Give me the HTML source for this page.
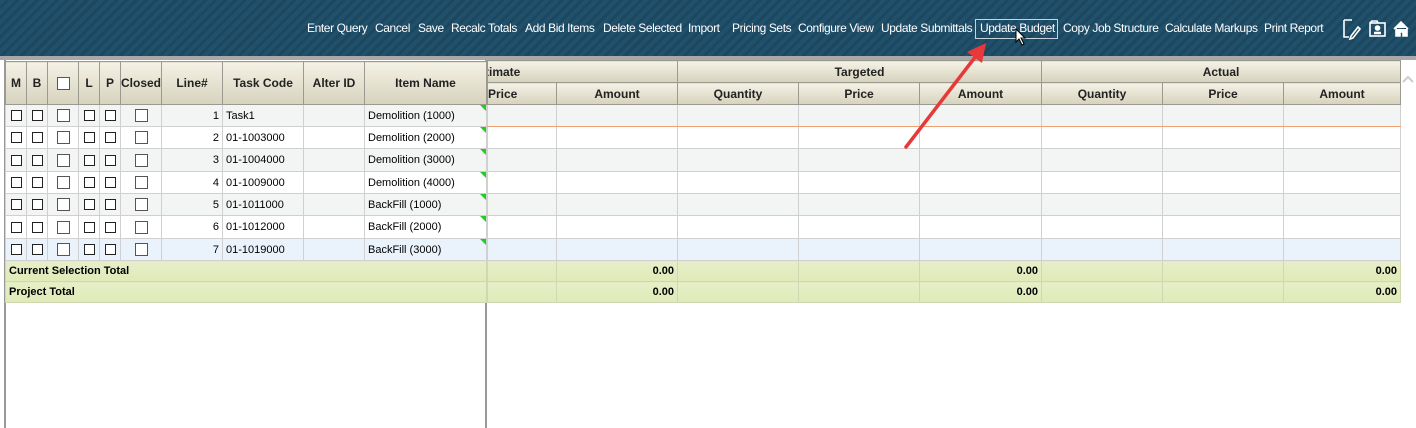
<!DOCTYPE html><html><head><style>
*{margin:0;padding:0;box-sizing:border-box}
body{width:1416px;height:428px;overflow:hidden;background:#fff;font-family:"Liberation Sans",Arial,sans-serif;position:relative}
#top{position:absolute;left:0;top:0;width:1416px;height:56px;background:repeating-linear-gradient(135deg,#21506b 0 4px,#1c4760 4px 7px)}
#top span{position:absolute;top:21px;color:#fff;font-size:12px;letter-spacing:-0.4px;white-space:nowrap}
#sep{position:absolute;left:0;top:56px;width:1416px;height:4px;background:#a8a8a8}
table{border-collapse:collapse;table-layout:fixed;position:absolute;font-size:11px}
td,th{border:1px solid #d0d0d0;overflow:hidden;white-space:nowrap;height:22px;padding:0 3px}
th{background:linear-gradient(#f4f2e6,#d6d2bd);border-color:#9a9a90;font-size:12px;color:#222;height:22px}
.cb{display:inline-block;width:11px;height:11px;border:1px solid #222;background:#fff;vertical-align:middle}
.cbw{width:13px;height:13px;border-color:#555}
tr.a td{background:#f3f5f4}
tr.w td{background:#fff}
tr.s td{background:#eaf3fc}
tr.h td{height:23px}
tr.t td{background:linear-gradient(#e6efc8,#dfeab8);font-weight:bold;height:21px;border-color:#cfd8b0}
.r{text-align:right}
.c{text-align:center}
.tri{position:relative}
.tri:after{content:"";position:absolute;right:0;top:0;border-top:6px solid #2c2;border-left:6px solid transparent}
</style></head><body>
<div id="top">
<span style="left:307px">Enter Query</span><span style="left:375px">Cancel</span><span style="left:418px">Save</span><span style="left:451px">Recalc Totals</span><span style="left:525px">Add Bid Items</span><span style="left:603px">Delete Selected</span><span style="left:688px">Import</span><span style="left:732px">Pricing Sets</span><span style="left:798px">Configure View</span><span style="left:881px">Update Submittals</span>
<div style="position:absolute;left:975px;top:19px;width:83px;height:20px;border:1px solid #c8d4dc"></div>
<span style="left:980px">Update Budget</span><span style="left:1063px">Copy Job Structure</span><span style="left:1165px">Calculate Markups</span><span style="left:1264px">Print Report</span>
<svg style="position:absolute;left:1340px;top:18px" width="76" height="22" viewBox="0 0 76 22" fill="none" stroke="#fff" stroke-width="1.6">
<path d="M4 2h8M4 2v17h5M11 18l7-9 2 2-7 9-3 1z"/>
<rect x="30" y="5" width="15" height="13"/><path d="M30 5l2-2h5l1 2" /><circle cx="37.5" cy="10" r="2" fill="#fff"/><path d="M34 15h7" stroke-width="2.5"/>
<path d="M54 11l7-7 7 7M56 10v8h4v-4h3v4h4v-8" fill="#fff"/></svg>
<svg style="position:absolute;left:1015px;top:28px" width="14" height="18" viewBox="0 0 14 18"><path d="M1 1v13l3-3 3 6 2-1-3-6h4z" fill="#fff" stroke="#000" stroke-width="1"/></svg>
</div>
<div id="sep"></div>
<div style="position:absolute;left:4px;top:60px;width:2px;height:368px;background:#999"></div>
<div style="position:absolute;left:485px;top:60px;width:2px;height:368px;background:#999"></div>
<table style="left:5px;top:61px;width:481px">
<colgroup><col style="width:21px"><col style="width:21px"><col style="width:31px"><col style="width:21px"><col style="width:21px"><col style="width:41px"><col style="width:61px"><col style="width:81px"><col style="width:61px"><col style="width:122px"></colgroup>
<tr><th style="height:43px;padding:0">M</th><th style="padding:0">B</th><th style="padding:0"><span class="cb cbw"></span></th><th style="padding:0">L</th><th style="padding:0">P</th><th style="padding:0">Closed</th><th>Line#</th><th>Task Code</th><th>Alter ID</th><th>Item Name</th></tr>
<tr class="a"><td class="c" style="padding:0"><span class="cb"></span></td><td class="c" style="padding:0"><span class="cb"></span></td><td class="c"><span class="cb cbw"></span></td><td class="c" style="padding:0"><span class="cb"></span></td><td class="c" style="padding:0"><span class="cb"></span></td><td class="c"><span class="cb cbw"></span></td><td class="r">1</td><td>Task1</td><td></td><td class="tri">Demolition (1000)</td></tr>
<tr class="w"><td class="c" style="padding:0"><span class="cb"></span></td><td class="c" style="padding:0"><span class="cb"></span></td><td class="c"><span class="cb cbw"></span></td><td class="c" style="padding:0"><span class="cb"></span></td><td class="c" style="padding:0"><span class="cb"></span></td><td class="c"><span class="cb cbw"></span></td><td class="r">2</td><td>01-1003000</td><td></td><td class="tri">Demolition (2000)</td></tr>
<tr class="a h"><td class="c" style="padding:0"><span class="cb"></span></td><td class="c" style="padding:0"><span class="cb"></span></td><td class="c"><span class="cb cbw"></span></td><td class="c" style="padding:0"><span class="cb"></span></td><td class="c" style="padding:0"><span class="cb"></span></td><td class="c"><span class="cb cbw"></span></td><td class="r">3</td><td>01-1004000</td><td></td><td class="tri">Demolition (3000)</td></tr>
<tr class="w"><td class="c" style="padding:0"><span class="cb"></span></td><td class="c" style="padding:0"><span class="cb"></span></td><td class="c"><span class="cb cbw"></span></td><td class="c" style="padding:0"><span class="cb"></span></td><td class="c" style="padding:0"><span class="cb"></span></td><td class="c"><span class="cb cbw"></span></td><td class="r">4</td><td>01-1009000</td><td></td><td class="tri">Demolition (4000)</td></tr>
<tr class="a"><td class="c" style="padding:0"><span class="cb"></span></td><td class="c" style="padding:0"><span class="cb"></span></td><td class="c"><span class="cb cbw"></span></td><td class="c" style="padding:0"><span class="cb"></span></td><td class="c" style="padding:0"><span class="cb"></span></td><td class="c"><span class="cb cbw"></span></td><td class="r">5</td><td>01-1011000</td><td></td><td class="tri">BackFill (1000)</td></tr>
<tr class="w h"><td class="c" style="padding:0"><span class="cb"></span></td><td class="c" style="padding:0"><span class="cb"></span></td><td class="c"><span class="cb cbw"></span></td><td class="c" style="padding:0"><span class="cb"></span></td><td class="c" style="padding:0"><span class="cb"></span></td><td class="c"><span class="cb cbw"></span></td><td class="r">6</td><td>01-1012000</td><td></td><td class="tri">BackFill (2000)</td></tr>
<tr class="s"><td class="c" style="padding:0"><span class="cb"></span></td><td class="c" style="padding:0"><span class="cb"></span></td><td class="c"><span class="cb cbw"></span></td><td class="c" style="padding:0"><span class="cb"></span></td><td class="c" style="padding:0"><span class="cb"></span></td><td class="c"><span class="cb cbw"></span></td><td class="r">7</td><td>01-1019000</td><td></td><td class="tri">BackFill (3000)</td></tr>
<tr class="t"><td colspan="10">Current Selection Total</td></tr>
<tr class="t"><td colspan="10">Project Total</td></tr>
</table>
<table style="left:487px;top:60px;width:913px">
<colgroup><col style="width:69px"><col style="width:121px"><col style="width:121px"><col style="width:121px"><col style="width:122px"><col style="width:121px"><col style="width:121px"><col style="width:117px"></colgroup>
<tr><th colspan="2" style="text-align:left;padding:0;text-indent:-3px">timate</th><th colspan="3">Targeted</th><th colspan="3">Actual</th></tr>
<tr><th style="text-align:left;padding:0">Price</th><th>Amount</th><th>Quantity</th><th>Price</th><th>Amount</th><th>Quantity</th><th>Price</th><th>Amount</th></tr>
<tr class="a"><td style="border-bottom:1px solid #f0a070"></td><td style="border-bottom:1px solid #f0a070"></td><td style="border-bottom:1px solid #f0a070"></td><td style="border-bottom:1px solid #f0a070"></td><td style="border-bottom:1px solid #f0a070"></td><td style="border-bottom:1px solid #f0a070"></td><td style="border-bottom:1px solid #f0a070"></td><td style="border-bottom:1px solid #f0a070"></td></tr>
<tr class="w"><td></td><td></td><td></td><td></td><td></td><td></td><td></td><td></td></tr>
<tr class="a h"><td></td><td></td><td></td><td></td><td></td><td></td><td></td><td></td></tr>
<tr class="w"><td></td><td></td><td></td><td></td><td></td><td></td><td></td><td></td></tr>
<tr class="a"><td></td><td></td><td></td><td></td><td></td><td></td><td></td><td></td></tr>
<tr class="w h"><td></td><td></td><td></td><td></td><td></td><td></td><td></td><td></td></tr>
<tr class="s"><td></td><td></td><td></td><td></td><td></td><td></td><td></td><td></td></tr>
<tr class="t"><td></td><td class="r">0.00</td><td></td><td></td><td class="r">0.00</td><td></td><td></td><td class="r">0.00</td></tr>
<tr class="t"><td></td><td class="r">0.00</td><td></td><td></td><td class="r">0.00</td><td></td><td></td><td class="r">0.00</td></tr>
</table>
<svg style="position:absolute;left:1400px;top:70px" width="16" height="16"><path d="M3 12l5-5 5 5" fill="none" stroke="#ccc" stroke-width="2"/></svg>
<svg style="position:absolute;left:0;top:0" width="1416" height="428"><line x1="906" y1="147" x2="976" y2="56" stroke="#e8393a" stroke-width="3.5" stroke-linecap="round"/><path d="M986 43l-4 20-15-11z" fill="#e8393a"/></svg>
</body></html>
